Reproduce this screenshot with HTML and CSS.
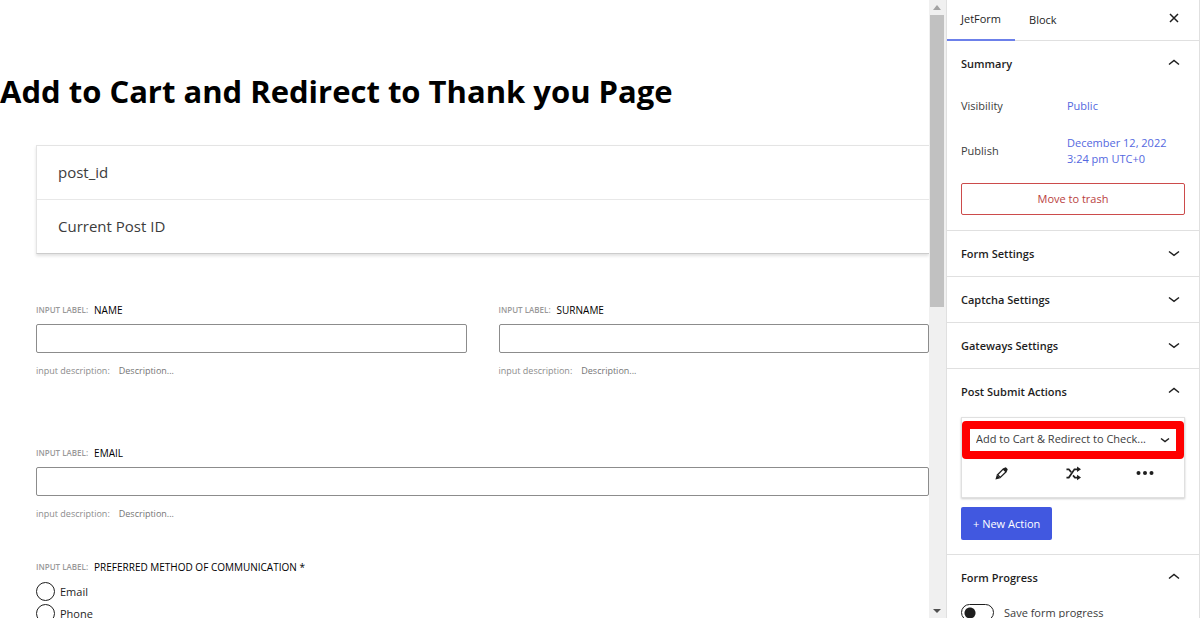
FILE: index.html
```html
<!DOCTYPE html>
<html lang="en">
<head>
<meta charset="utf-8">
<title>Add to Cart and Redirect to Thank you Page</title>
<link rel="stylesheet" href="styles.css">
</head>
<body>
<div class="app">
  <main class="editor">
    <h1 class="title">Add to Cart and Redirect to Thank you Page</h1>
    <div class="canvas">
      <div class="hidden-field">
        <div class="hidden-row">post_id</div>
        <div class="hidden-row">Current Post ID</div>
      </div>
      <div class="columns">
        <div class="field">
          <div class="label-row"><span class="hint">INPUT LABEL:</span><label class="label" for="name">NAME</label></div>
          <input class="text-input" id="name" type="text">
          <div class="desc-row"><span>input description:</span><span class="desc">Description...</span></div>
        </div>
        <div class="field">
          <div class="label-row"><span class="hint">INPUT LABEL:</span><label class="label" for="surname">SURNAME</label></div>
          <input class="text-input" id="surname" type="text">
          <div class="desc-row"><span>input description:</span><span class="desc">Description...</span></div>
        </div>
      </div>
      <div class="field field-email">
        <div class="label-row"><span class="hint">INPUT LABEL:</span><label class="label" for="email">EMAIL</label></div>
        <input class="text-input" id="email" type="text">
        <div class="desc-row"><span>input description:</span><span class="desc">Description...</span></div>
      </div>
      <div class="field" role="radiogroup" aria-labelledby="method">
        <div class="label-row"><span class="hint">INPUT LABEL:</span><span class="label" id="method">PREFERRED METHOD OF COMMUNICATION *</span></div>
        <div class="choices">
          <label class="choice"><input class="radio" type="radio" name="method">Email</label>
          <label class="choice"><input class="radio" type="radio" name="method">Phone</label>
        </div>
      </div>
    </div>
  </main>
  <div class="scrollbar" aria-hidden="true">
    <svg class="arrow" viewBox="0 0 16 13"><path d="M4 10 8 5l4 5z" fill="#a3a3a3"/></svg>
    <div class="track"><div class="thumb"></div></div>
    <svg class="arrow" viewBox="0 0 16 13"><path d="M4 4h8L8 8z" fill="#505050"/></svg>
  </div>
  <aside class="sidebar">
    <div class="tabs">
      <button class="tab tab-active" type="button">JetForm</button>
      <button class="tab" type="button">Block</button>
      <button class="close" type="button" aria-label="Close"><svg class="icon-close" viewBox="0 0 10 10"><path d="M1 1l8 8M9 1 1 9"/></svg></button>
    </div>
    <section class="panel">
      <button class="panel-head" type="button">Summary<svg class="chevron chevron-up" viewBox="0 0 12 7"><path d="M1 5.500 6 1.500l5 4"/></svg></button>
      <div class="summary">
        <div class="row"><span>Visibility</span><a class="link" href="#">Public</a></div>
        <div class="row row-publish"><span>Publish</span><a class="link" href="#">December 12, 2022<br>3:24 pm UTC+0</a></div>
        <button class="trash" type="button">Move to trash</button>
      </div>
    </section>
    <section class="panel"><button class="panel-head" type="button">Form Settings<svg class="chevron" viewBox="0 0 12 7"><path d="M1 1.500 6 5.300l5-3.800"/></svg></button></section>
    <section class="panel"><button class="panel-head" type="button">Captcha Settings<svg class="chevron" viewBox="0 0 12 7"><path d="M1 1.500 6 5.300l5-3.800"/></svg></button></section>
    <section class="panel"><button class="panel-head" type="button">Gateways Settings<svg class="chevron" viewBox="0 0 12 7"><path d="M1 1.500 6 5.300l5-3.800"/></svg></button></section>
    <section class="panel">
      <button class="panel-head" type="button">Post Submit Actions<svg class="chevron chevron-up" viewBox="0 0 12 7"><path d="M1 5.500 6 1.500l5 4"/></svg></button>
      <div class="actions">
        <div class="card">
          <div class="action-type">
            <select class="select" aria-label="Action type"><option>Add to Cart &amp; Redirect to Check...</option></select>
            <svg class="select-arrow" viewBox="0 0 10 6"><path d="M1 1.500 5 4.500l4-3"/></svg>
          </div>
          <div class="tools">
            <button class="tool" type="button" aria-label="Edit"><svg class="icon-tool" viewBox="0 0 16 16"><path d="M3.800 9.300 10 3 13 6 6.700 12.200z" fill="#fff" stroke="#1e1e1e" stroke-width="1.400"/><path d="M1.500 14.500 3 9.300l3.700 3.700zM9.300 3.700 11.200 1.800q1-.9 2 0l1 1q.9 1 0 2L12.300 6.700z" fill="#1e1e1e"/></svg></button>
            <button class="tool" type="button" aria-label="Conditions"><svg class="icon-tool" viewBox="0 0 16 16"><path d="M.500 3.500H3L5.500 6.500M7.500 10l2 2.300H13M.500 12.300H3l6-8.800h4" fill="none" stroke="#1e1e1e" stroke-width="1.800"/><path d="M11.800.500 16 3.500l-4.200 3zM11.800 9.300l4.200 3-4.200 3z" fill="#1e1e1e"/></svg></button>
            <button class="tool" type="button" aria-label="More"><svg class="icon-more" viewBox="0 0 18 6"><g fill="#1e1e1e"><circle cx="2.500" cy="3" r="2"/><circle cx="9" cy="3" r="2"/><circle cx="15.500" cy="3" r="2"/></g></svg></button>
          </div>
        </div>
        <button class="primary" type="button">+ New Action</button>
      </div>
    </section>
    <section class="panel">
      <button class="panel-head" type="button">Form Progress<svg class="chevron chevron-up" viewBox="0 0 12 7"><path d="M1 5.500 6 1.500l5 4"/></svg></button>
      <label class="toggle-row"><input class="toggle" type="checkbox">Save form progress</label>
    </section>
  </aside>
</div>
</body>
</html>
```
FILE: styles.css
```css
* { box-sizing: border-box; }
body { margin: 0; background: #fff; color: #1e1e1e; font-family: "Open Sans", "Noto Sans", sans-serif; font-size: 11px; line-height: 16px; }
button, input, select { font: inherit; color: inherit; }
button { background: none; border: 0; padding: 0; cursor: pointer; }
.app { display: flex; height: 100vh; overflow: hidden; }

.editor { flex: 1; min-width: 0; overflow: hidden; padding-top: 70px; }
.title { margin: 0; font-size: 31px; line-height: 42px; font-weight: 700; color: #000; white-space: nowrap; }
.canvas { padding: 33px 0 0 36px; }
.hidden-field { border: 1px solid #e4e4e4; border-right: 0; border-bottom-color: #ccc; box-shadow: 0 2px 3px rgba(0, 0, 0, .12); }
.hidden-row { padding-left: 21px; font-size: 15px; line-height: 53px; color: #3c3c3c; }
.hidden-row + .hidden-row { border-top: 1px solid #e8e8e8; }
.columns { display: grid; grid-template-columns: 1fr 1fr; gap: 32px; margin-top: 48px; }
.field-email { margin: 66px 0 37px; }
.label-row { display: flex; align-items: center; gap: 6px; height: 16px; }
.hint { font-size: 8px; font-weight: 600; color: #999; }
.label { font-size: 10px; font-weight: 500; color: #000; }
.text-input { display: block; width: 100%; height: 29px; margin-top: 6px; padding: 0 8px; border: 1px solid #8c8c8c; border-radius: 2px; background: #fff; }
.desc-row { display: flex; gap: 9px; margin-top: 10px; font-size: 9px; color: #8c8c8c; }
.desc { color: #757575; }
.choices { display: grid; gap: 3px; margin-top: 7px; }
.choice { display: flex; align-items: center; gap: 5px; height: 19px; }
.radio { appearance: none; width: 19px; height: 19px; margin: 0; border: 1px solid #1e1e1e; border-radius: 50%; }

.scrollbar { display: flex; flex-direction: column; width: 17px; background: #f0f0f0; }
.arrow { display: block; width: 16px; height: 13px; }
.track { flex: 1; padding: 2px 2px 0 1px; }
.thumb { height: 49.5%; background: #c1c1c1; }

.sidebar { width: 254px; border: solid #e0e0e0; border-width: 0 1px; overflow: hidden; }
.tabs { display: flex; height: 41px; border-bottom: 1px solid #e0e0e0; }
.tab { height: 41px; padding: 0 14px 2px; font-weight: 500; }
.tab-active { border-bottom: 2px solid #6c80ea; }
.close { margin-left: auto; width: 50px; padding-bottom: 3px; }
.icon-close { width: 10px; height: 10px; }
.icon-close path, .chevron path, .select-arrow path { fill: none; stroke: #1e1e1e; stroke-width: 1.500; }
.panel { border-bottom: 1px solid #e0e0e0; }
.panel-head { display: flex; align-items: center; justify-content: space-between; width: 100%; height: 45px; padding: 0 19px 0 14px; font-weight: 600; text-align: left; }
.chevron { width: 12px; height: 7px; }
.chevron-up { margin-bottom: 3px; }
.summary { padding: 12px 14px 15px; }
.row { display: grid; grid-template-columns: 106px 1fr; align-items: center; color: #3c3c3c; }
.row-publish { margin: 21px 0 16px; }
.link { color: #5468e0; text-decoration: none; }
.trash { display: block; width: 100%; height: 32px; border: 1px solid #cc4b4b; border-radius: 2px; color: #b93e3e; }
.actions { padding: 3px 14px 14px; }
.card { height: 81px; border: 1px solid #e0e0e0; box-shadow: 0 1px 2px rgba(0, 0, 0, .2); padding-top: 3px; }
.action-type { display: flex; align-items: center; height: 38px; padding-right: 6px; border: 8px solid #f00; border-radius: 4px; }
.select { appearance: none; flex: 1; min-width: 0; height: 22px; padding: 0 0 2px 6px; border: 0; background: #fff; color: #3c3c3c; }
.select-arrow { width: 10px; height: 6px; flex: none; }
.tools { display: grid; grid-template-columns: 1fr 1fr 1fr; align-items: center; padding: 4px 3px 0; }
.tool { display: flex; justify-content: center; align-items: center; height: 20px; }
.icon-tool { width: 15px; height: 15px; }
.icon-more { width: 18px; height: 6px; }
.primary { display: block; height: 33px; margin-top: 9px; padding: 0 12px; border-radius: 2px; background: #4158e0; color: #fff; font-weight: 500; }
.toggle-row { display: flex; align-items: center; gap: 10px; padding: 4px 14px 12px; color: #3c3c3c; }
.toggle { appearance: none; width: 33px; height: 17px; margin: 0; border: 1px solid #1e1e1e; border-radius: 9px; background: radial-gradient(circle at 8px 8px, #1e1e1e 5px, transparent 6px); }
```
